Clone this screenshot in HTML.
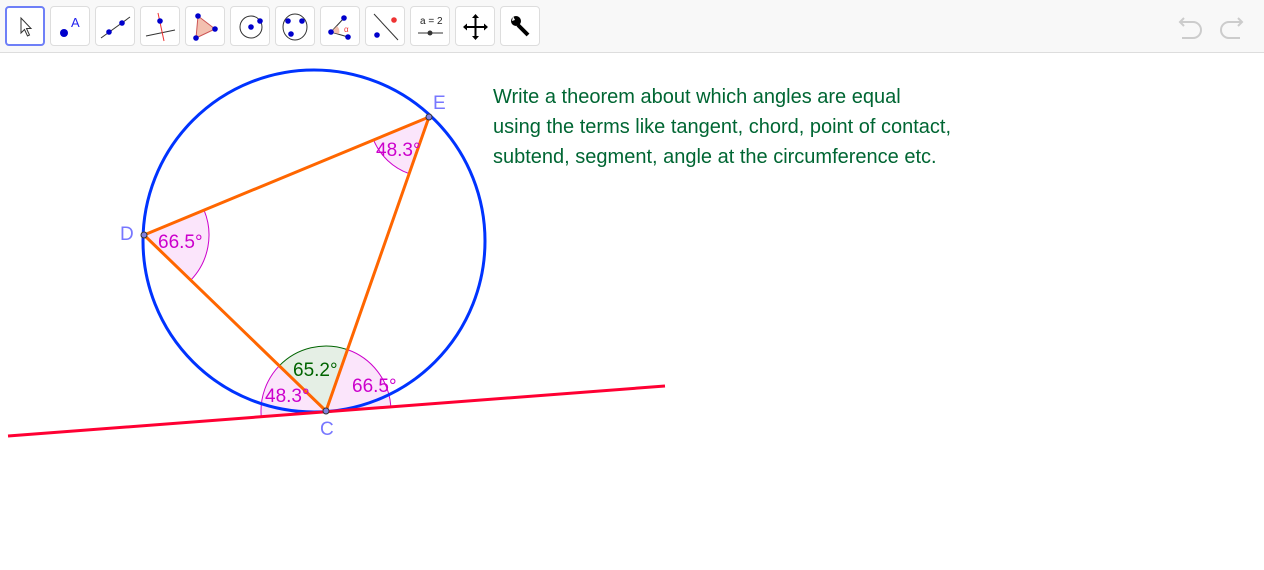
<!DOCTYPE html>
<html><head><meta charset="utf-8"><style>
body{margin:0;width:1264px;height:570px;overflow:hidden;background:#fff;font-family:"Liberation Sans",sans-serif}
#tb{position:absolute;left:0;top:0;width:1264px;height:52px;background:#f8f8f8;border-bottom:1px solid #ddd}
.b{position:absolute;top:6px;width:40px;height:40px;border:1px solid #ddd;border-radius:4px;background:#fff;box-sizing:border-box}
.b.s{border:2px solid #6e7ff7}
.b svg{position:absolute;left:1px;top:1px}
#txt{position:absolute;left:493px;top:82px;color:#006633;font-size:20px;line-height:30px}
</style></head><body>
<div id="tb">
<div class="b s" style="left:5px"><svg width="37" height="37"><path d="M13 9 L13 24 L16.5 20.5 L19.5 27 L21.5 26 L18.5 19.5 L23 19.5 Z" fill="#fff" stroke="#333" stroke-width="1"/></svg></div>
<div class="b" style="left:50px"><svg width="37" height="37"><circle cx="12" cy="25" r="4" fill="#0000cc"/><text x="19" y="19" font-size="13" fill="#2222ee" font-family="Liberation Sans">A</text></svg></div>
<div class="b" style="left:95px"><svg width="37" height="37"><line x1="4" y1="30" x2="33" y2="9" stroke="#333"/><circle cx="12" cy="24" r="2.8" fill="#0000cc"/><circle cx="25" cy="15" r="2.8" fill="#0000cc"/></svg></div>
<div class="b" style="left:140px"><svg width="37" height="37"><line x1="4" y1="28" x2="33" y2="22" stroke="#333"/><line x1="16" y1="5" x2="22" y2="33" stroke="#e33"/><circle cx="18" cy="13" r="2.8" fill="#0000cc"/></svg></div>
<div class="b" style="left:185px"><svg width="37" height="37"><path d="M11 8 L28 21 L9 30 Z" fill="#f3c0b0" stroke="#c55"/><circle cx="11" cy="8" r="2.8" fill="#0000cc"/><circle cx="28" cy="21" r="2.8" fill="#0000cc"/><circle cx="9" cy="30" r="2.8" fill="#0000cc"/></svg></div>
<div class="b" style="left:230px"><svg width="37" height="37"><circle cx="19" cy="19" r="11" fill="none" stroke="#333"/><circle cx="19" cy="19" r="2.8" fill="#0000cc"/><circle cx="28" cy="13" r="2.8" fill="#0000cc"/></svg></div>
<div class="b" style="left:275px"><svg width="37" height="37"><ellipse cx="18" cy="19" rx="12" ry="13" fill="none" stroke="#333"/><circle cx="11" cy="13" r="2.8" fill="#0000cc"/><circle cx="25" cy="13" r="2.8" fill="#0000cc"/><circle cx="14" cy="26" r="2.8" fill="#0000cc"/></svg></div>
<div class="b" style="left:320px"><svg width="37" height="37"><path d="M9 24 L22 10 M9 24 L26 29" stroke="#333" fill="none"/><path d="M9 24 L15 18 A8 8 0 0 1 17 26 Z" fill="#f3c0b0"/><text x="22" y="24" font-size="8" fill="#e33">α</text><circle cx="9" cy="24" r="2.8" fill="#0000cc"/><circle cx="22" cy="10" r="2.8" fill="#0000cc"/><circle cx="26" cy="29" r="2.8" fill="#0000cc"/></svg></div>
<div class="b" style="left:365px"><svg width="37" height="37"><line x1="7" y1="6" x2="31" y2="32" stroke="#333"/><circle cx="10" cy="27" r="2.8" fill="#0000cc"/><circle cx="27" cy="12" r="2.8" fill="#e33"/></svg></div>
<div class="b" style="left:410px"><svg width="37" height="37"><text x="8" y="16" font-size="10" fill="#222" font-family="Liberation Sans">a = 2</text><line x1="6" y1="25" x2="31" y2="25" stroke="#333"/><circle cx="18" cy="25" r="2.5" fill="#333"/></svg></div>
<div class="b" style="left:455px"><svg width="37" height="37"><path d="M18.5 7 V31 M7 19 H30" stroke="#000" stroke-width="2"/><path d="M18.5 6 L15 10 H22Z M18.5 32 L15 28 H22Z M6 19 L10 15.5 V22.5Z M31 19 L27 15.5 V22.5Z" fill="#000"/></svg></div>
<div class="b" style="left:500px"><svg width="37" height="37"><path d="M16 17 L26 27" stroke="#000" stroke-width="4"/><circle cx="14" cy="13" r="5" fill="#000"/><path d="M11 8 L13 12 L10 13Z" fill="#fff"/></svg></div>
<svg style="position:absolute;left:1176px;top:12px" width="70" height="30"><path d="M8 6 L4 10 L8 14 M4 10 H17 A8 8 0 0 1 17 26 H6" fill="none" stroke="#ccc" stroke-width="2"/><path d="M62 6 L66 10 L62 14 M66 10 H53 A8 8 0 0 0 53 26 H64" fill="none" stroke="#ccc" stroke-width="2"/></svg>
</div>
<svg id="g" style="position:absolute;left:0;top:0" width="1264" height="570"></svg>
<div id="txt">Write a theorem about which angles are equal<br>using the terms like tangent, chord, point of contact,<br>subtend, segment, angle at the circumference etc.</div>
<script>
var C=[326,411],D=[144,235],E=[429,117],L=[8,436],R=[665,386];
function ang(p,q){return Math.atan2(q[1]-p[1],q[0]-p[0]);}
function sector(P,a1,a2,r,fill,stroke){
 while(a2<a1)a2+=2*Math.PI;
 var x1=P[0]+r*Math.cos(a1),y1=P[1]+r*Math.sin(a1),x2=P[0]+r*Math.cos(a2),y2=P[1]+r*Math.sin(a2);
 var lg=(a2-a1)>Math.PI?1:0;
 return '<path d="M'+P[0]+' '+P[1]+' L'+x1+' '+y1+' A'+r+' '+r+' 0 '+lg+' 1 '+x2+' '+y2+' Z" fill="'+fill+'" stroke="'+stroke+'" stroke-width="1"/>';
}
var s='';
s+=sector(C,ang(C,L),ang(C,D),65,'rgba(220,0,220,0.1)','#cc00cc');
s+=sector(C,ang(C,E),ang(C,R),65,'rgba(220,0,220,0.1)','#cc00cc');
s+=sector(C,ang(C,D),ang(C,E),65,'rgba(0,100,0,0.1)','#006400');
s+=sector(D,ang(D,E),ang(D,C),65,'rgba(220,0,220,0.1)','#cc00cc');
s+=sector(E,ang(E,C),ang(E,D),60,'rgba(220,0,220,0.1)','#cc00cc');
s+='<circle cx="314" cy="241" r="171" fill="none" stroke="#0033ff" stroke-width="3"/>';
s+='<line x1="8" y1="436" x2="665" y2="386" stroke="#ff0033" stroke-width="3"/>';
s+='<path d="M144 235 L429 117 L326 411 Z" fill="none" stroke="#ff6600" stroke-width="3"/>';
var t=function(x,y,c,v){return '<text x="'+x+'" y="'+y+'" fill="'+c+'" font-size="19" font-family="Liberation Sans">'+v+'</text>';};
s+=t(158,248,'#cc00cc','66.5°')+t(376,156,'#cc00cc','48.3°')+t(293,376,'#006400','65.2°')+t(265,402,'#cc00cc','48.3°')+t(352,392,'#cc00cc','66.5°');
s+=t(120,240,'#7777ff','D')+t(433,109,'#7777ff','E')+t(320,435,'#7777ff','C');
[C,D,E].forEach(function(p){s+='<circle cx="'+p[0]+'" cy="'+p[1]+'" r="3" fill="#8080e0" stroke="#333" stroke-width="1"/>';});
document.getElementById('g').innerHTML=s;
</script>
</body></html>
